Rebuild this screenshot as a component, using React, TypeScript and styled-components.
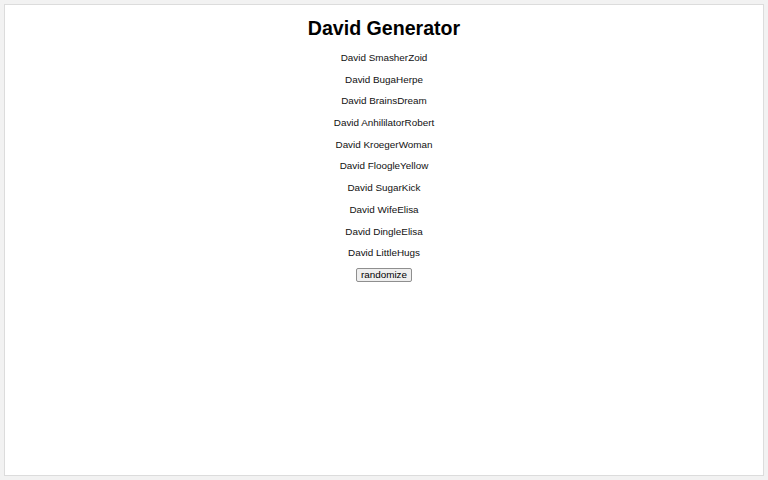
import React, { useState } from "react";
import styled, { createGlobalStyle } from "styled-components";

const GlobalStyle = createGlobalStyle`
    html, body {
        margin: 0;
        padding: 0;
        background: #f2f2f2;
        font-family: "Liberation Sans", Arial, sans-serif;
    }
`;

const Page = styled.div`
    padding: 4px;
    height: 480px;
    box-sizing: border-box;
`;

const Panel = styled.div`
    height: 100%;
    box-sizing: border-box;
    background: #ffffff;
    border: 1px solid #dcdcdc;
    display: flex;
    flex-direction: column;
    align-items: center;
    padding-top: 11px;
`;

const Title = styled.h1`
    margin: 0 0 12px;
    font-size: 19.6px;
    line-height: 24px;
    font-weight: bold;
    color: #000;
`;

const NameList = styled.div`
    display: flex;
    flex-direction: column;
    align-items: center;
    gap: 9.7px;
`;

const Name = styled.div`
    font-size: 9.9px;
    line-height: 12px;
    color: #111;
`;

const RandomizeButton = styled.button`
    margin-top: 9px;
    font-family: "Liberation Sans", Arial, sans-serif;
    font-size: 9.9px;
    line-height: 12px;
    padding: 0 4px;
    background: #efefef;
    border: 1px solid #8f8f8f;
    border-radius: 2px;
    color: #000;
`;

const FIRST = ["Smasher", "Buga", "Brains", "Anhililator", "Kroeger", "Floogle", "Sugar", "Wife", "Dingle", "Little"];
const LAST = ["Zoid", "Herpe", "Dream", "Robert", "Woman", "Yellow", "Kick", "Elisa", "Elisa", "Hugs"];

const initialNames = [
    "SmasherZoid",
    "BugaHerpe",
    "BrainsDream",
    "AnhililatorRobert",
    "KroegerWoman",
    "FloogleYellow",
    "SugarKick",
    "WifeElisa",
    "DingleElisa",
    "LittleHugs",
];

const pick = (list: string[]) => list[Math.floor(Math.random() * list.length)];

export default function App() {
    const [names, setNames] = useState<string[]>(initialNames);

    const onRandomize = () => {
        setNames(names.map(() => pick(FIRST) + pick(LAST)));
    };

    return (
        <Page>
            <GlobalStyle />
            <Panel>
                <Title>David Generator</Title>
                <NameList>
                    {names.map((name, i) => (
                        <Name key={i}>David {name}</Name>
                    ))}
                </NameList>
                <RandomizeButton type="button" onClick={onRandomize}>
                    randomize
                </RandomizeButton>
            </Panel>
        </Page>
    );
}
